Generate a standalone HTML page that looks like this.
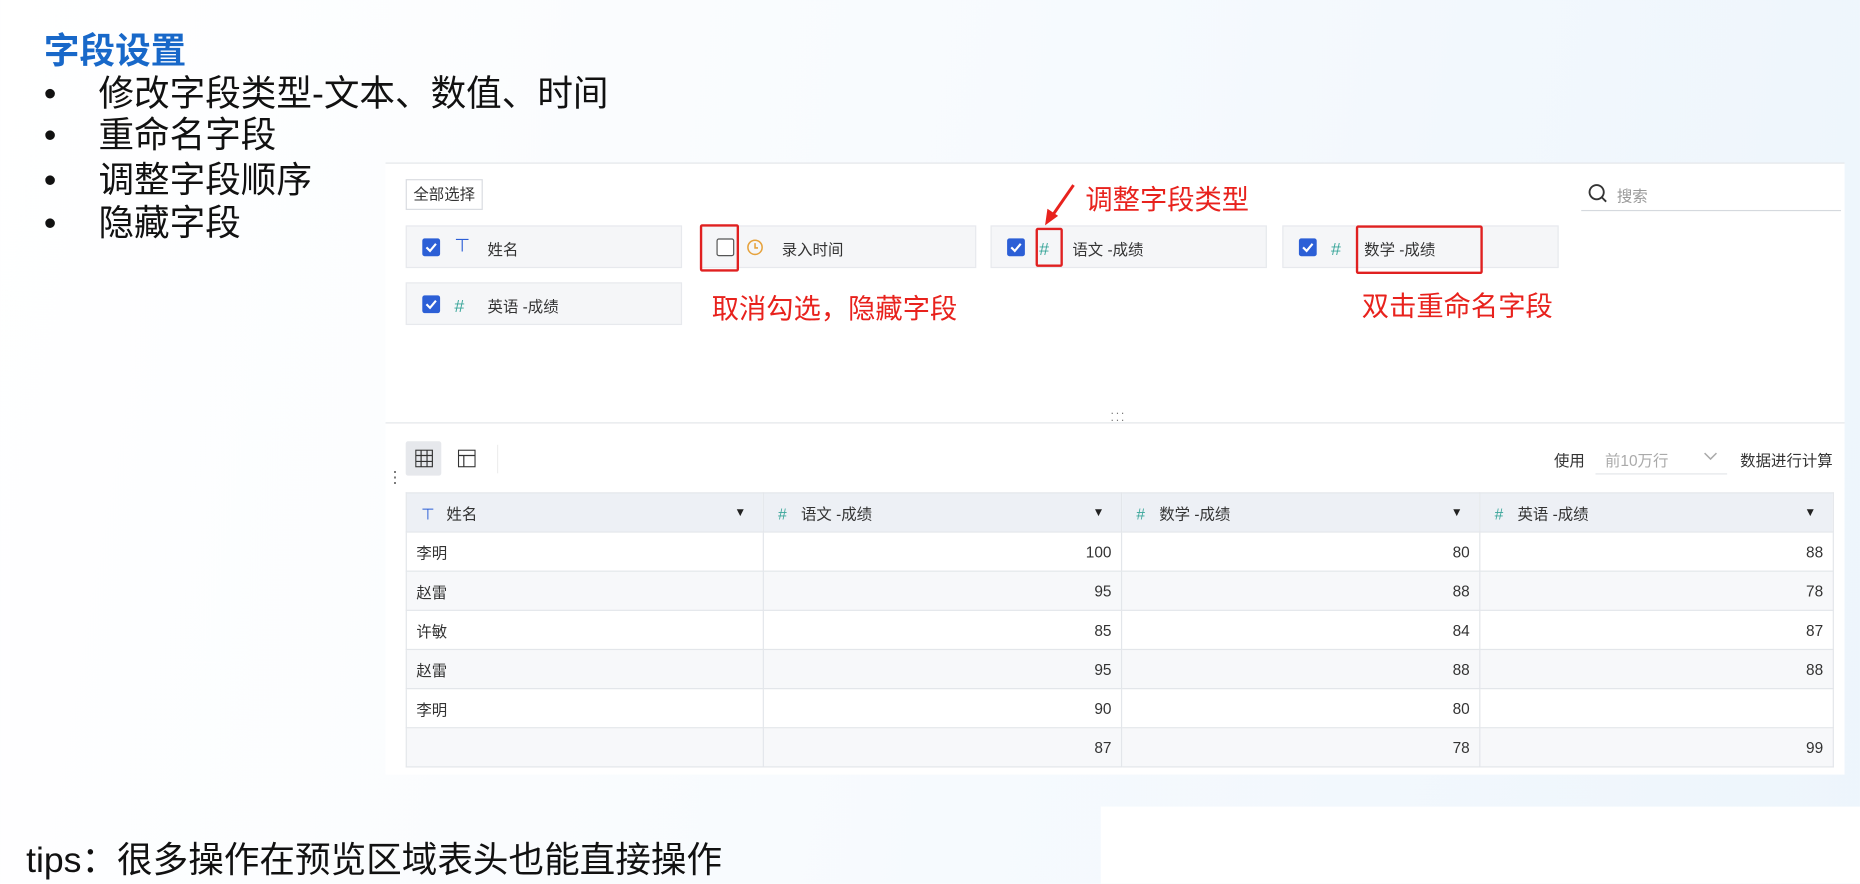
<!DOCTYPE html>
<html><head><meta charset="utf-8"><style>
html,body{margin:0;padding:0;width:1860px;height:883px;overflow:hidden}
body{background:linear-gradient(100deg,#ffffff 0%,#f8fbfe 45%,#edf5fc 100%);font-family:"Liberation Sans","Noto Sans CJK SC",sans-serif}
#w{position:absolute;left:0;top:0;width:1568px;height:745px;transform:scale(1.18622);transform-origin:0 0}
.a{position:absolute}
.title{left:37px;top:26px;font-size:30px;font-weight:bold;color:#1868c9;line-height:36px}
.bl{left:37px;font-size:30px;color:#111;line-height:34px}
.bl span{position:absolute;left:0}
.bl b{font-weight:normal;position:absolute;left:46px;white-space:nowrap}
.panel{left:325px;top:137px;width:1230px;height:515px;background:#fff;border-top:1px solid #e3e6ea}
.btn{left:342px;top:151px;width:63px;height:24px;border:1px solid #d9dce1;font-size:13px;line-height:24px;text-align:center;color:#333;background:#fff}
.card{position:absolute;width:231px;height:34px;background:#f5f6f8;border:1px solid #e7e9ed;font-size:13px;color:#333}
.card .cb{position:absolute;left:13px;top:10px;width:15px;height:15px;background:#2c5fd6;border-radius:2px}
.card .cb.off{background:#fff;border:1px solid #555;width:13px;height:13px}
.card .ic{position:absolute;left:40px;top:8px;font-size:15px;line-height:18px}
.card .t{position:absolute;left:68px;top:9px}
.red{position:absolute;border:2px solid #e02020;border-radius:2px}
.rt{position:absolute;color:#e8221d;font-size:23px;white-space:nowrap}
table{position:absolute;left:342px;top:415px;border-collapse:collapse;font-size:13px;color:#333}
td,th{border:1px solid #e3e6ea;height:32px;padding:0 8px;font-weight:normal}
th{background:#edf0f5;text-align:left;position:relative;vertical-align:middle}
td{text-align:right}
td:first-child{text-align:left}
tr.s td{background:#f7f8fa}
th .tri{position:absolute;right:14px;top:11px;font-size:10px;color:#222}
.g{color:#3aa69a}
</style></head><body><div id="w">
<div class="a title">字段设置</div>
<div class="a bl" style="top:63px"><span>•</span><b>修改字段类型-文本、数值、时间</b></div>
<div class="a bl" style="top:98px"><span>•</span><b>重命名字段</b></div>
<div class="a bl" style="top:136px"><span>•</span><b>调整字段顺序</b></div>
<div class="a bl" style="top:172px"><span>•</span><b>隐藏字段</b></div>

<div class="a panel"></div>
<div class="a btn">全部选择</div>
<svg class="a" style="left:1338px;top:154px" width="18" height="18"><circle cx="8" cy="8" r="6" fill="none" stroke="#333" stroke-width="1.6"/><line x1="12.5" y1="12.5" x2="16" y2="16" stroke="#333" stroke-width="1.6"/></svg>
<div class="a" style="left:1363px;top:155px;font-size:13px;color:#999">搜索</div>
<div class="a" style="left:1333px;top:177px;width:219px;height:1px;background:#d5d9de"></div>

<div class="card" style="left:342px;top:190px"><div class="cb"><svg width="15" height="15"><path d="M3.5 7.5l3 3 5-6" stroke="#fff" stroke-width="1.8" fill="none"/></svg></div><div class="ic" style="color:#2c5fd6">⊤</div><div class="t">姓名</div></div>
<div class="card" style="left:590px;top:190px"><div class="cb off"></div><svg class="a" style="left:38px;top:10px" width="15" height="15"><circle cx="7.5" cy="7.5" r="6" fill="none" stroke="#e6a23c" stroke-width="1.3"/><path d="M7.5 4v4h2.5" stroke="#e6a23c" stroke-width="1.3" fill="none"/></svg><div class="t">录入时间</div></div>
<div class="card" style="left:835px;top:190px"><div class="cb"><svg width="15" height="15"><path d="M3.5 7.5l3 3 5-6" stroke="#fff" stroke-width="1.8" fill="none"/></svg></div><div class="ic g" style="top:11px">#</div><div class="t">语文 -成绩</div></div>
<div class="card" style="left:1081px;top:190px"><div class="cb"><svg width="15" height="15"><path d="M3.5 7.5l3 3 5-6" stroke="#fff" stroke-width="1.8" fill="none"/></svg></div><div class="ic g" style="top:11px">#</div><div class="t">数学 -成绩</div></div>
<div class="card" style="left:342px;top:238px"><div class="cb"><svg width="15" height="15"><path d="M3.5 7.5l3 3 5-6" stroke="#fff" stroke-width="1.8" fill="none"/></svg></div><div class="ic g" style="top:11px">#</div><div class="t">英语 -成绩</div></div>

<div class="red" style="left:590px;top:189px;width:29px;height:36px"></div>
<div class="red" style="left:873px;top:192px;width:19px;height:29px"></div>
<div class="red" style="left:1143px;top:190px;width:103px;height:37px"></div>
<div class="rt" style="left:915px;top:149px">调整字段类型</div>
<div class="rt" style="left:600px;top:241px">取消勾选，隐藏字段</div>
<div class="rt" style="left:1148px;top:239px">双击重命名字段</div>
<svg class="a" style="left:875px;top:152px" width="40" height="42"><line x1="30" y1="4" x2="12" y2="30" stroke="#e8221d" stroke-width="2.5"/><path d="M6 38 L8 24 L17 30 Z" fill="#e8221d"/></svg>

<div class="a" style="left:325px;top:356px;width:1230px;height:1px;background:#e3e6ea"></div>
<div class="a" style="left:936px;top:346px;font-size:10px;color:#777;letter-spacing:1px;line-height:6px">···<br>···</div>
<div class="a" style="left:326px;top:394px;font-size:14px;color:#666">⋮</div>
<div class="a" style="left:342px;top:372px;width:30px;height:29px;background:#e6e8ec;border-radius:2px"></div>
<svg class="a" style="left:350px;top:379px" width="15" height="15"><rect x="0.5" y="0.5" width="14" height="14" fill="none" stroke="#333"/><path d="M5 0.5v14M10 0.5v14M0.5 5h14M0.5 10h14" stroke="#333"/></svg>
<svg class="a" style="left:386px;top:379px" width="15" height="15"><rect x="0.5" y="0.5" width="14" height="14" fill="none" stroke="#333"/><path d="M0.5 5h14M5 5v9.5" stroke="#333"/></svg>
<div class="a" style="left:419px;top:375px;width:1px;height:24px;background:#eee"></div>
<div class="a" style="left:1310px;top:378px;font-size:13px;color:#333">使用</div>
<div class="a" style="left:1345px;top:372px;width:111px;height:27px;border-bottom:1px solid #e3e6ea"></div>
<div class="a" style="left:1353px;top:378px;font-size:13px;color:#aaa">前10万行</div>
<svg class="a" style="left:1436px;top:381px" width="12" height="8"><path d="M1 1l5 5 5-5" stroke="#aaa" fill="none" stroke-width="1.3"/></svg>
<div class="a" style="left:1467px;top:378px;font-size:13px;color:#333">数据进行计算</div>

<table>
<tr><th style="width:284px"><span style="color:#2c5fd6;margin:0 10px 0 4px">⊤</span>姓名<span class="tri">▼</span></th><th style="width:285px"><span class="g" style="margin:0 12px 0 4px">#</span>语文 -成绩<span class="tri">▼</span></th><th style="width:285px"><span class="g" style="margin:0 12px 0 4px">#</span>数学 -成绩<span class="tri">▼</span></th><th style="width:281px"><span class="g" style="margin:0 12px 0 4px">#</span>英语 -成绩<span class="tri">▼</span></th></tr>
<tr><td>李明</td><td>100</td><td>80</td><td>88</td></tr>
<tr class="s"><td>赵雷</td><td>95</td><td>88</td><td>78</td></tr>
<tr><td>许敏</td><td>85</td><td>84</td><td>87</td></tr>
<tr class="s"><td>赵雷</td><td>95</td><td>88</td><td>88</td></tr>
<tr><td>李明</td><td>90</td><td>80</td><td></td></tr>
<tr class="s"><td></td><td>87</td><td>78</td><td>99</td></tr>
</table>

<div class="a" style="left:928px;top:680px;width:640px;height:65px;background:#fff"></div>
<div class="a" style="left:22px;top:700px;font-size:30px;color:#111">tips：很多操作在预览区域表头也能直接操作</div>
</div></body></html>
